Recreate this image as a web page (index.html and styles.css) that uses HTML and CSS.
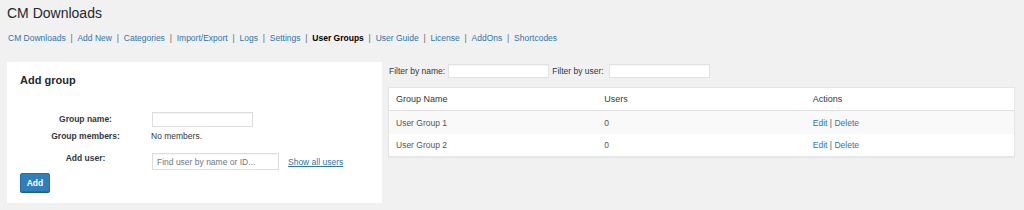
FILE: index.html
```html
<!DOCTYPE html>
<html>
<head>
<meta charset="utf-8">
<link rel="stylesheet" href="styles.css">
</head>
<body>
<div class="wrap">
  <h1 class="title">CM Downloads</h1>
  <nav class="subnav">
    <a class="nav-link" href="#">CM Downloads</a><span class="sep">|</span>
    <a class="nav-link" href="#">Add New</a><span class="sep">|</span>
    <a class="nav-link" href="#">Categories</a><span class="sep">|</span>
    <a class="nav-link" href="#">Import/Export</a><span class="sep">|</span>
    <a class="nav-link" href="#">Logs</a><span class="sep">|</span>
    <a class="nav-link" href="#">Settings</a><span class="sep">|</span>
    <a class="nav-link current" href="#">User Groups</a><span class="sep">|</span>
    <a class="nav-link" href="#">User Guide</a><span class="sep">|</span>
    <a class="nav-link" href="#">License</a><span class="sep">|</span>
    <a class="nav-link" href="#">AddOns</a><span class="sep">|</span>
    <a class="nav-link" href="#">Shortcodes</a>
  </nav>
  <div class="columns">
    <div class="panel">
      <h2 class="panel-title">Add group</h2>
      <div class="frow frow-1">
        <div class="flabel">Group name:</div>
        <div class="fvalue"><input class="text-input name-input" type="text"></div>
      </div>
      <div class="frow frow-2">
        <div class="flabel">Group members:</div>
        <div class="fvalue members">No members.</div>
      </div>
      <div class="frow frow-3">
        <div class="flabel">Add user:</div>
        <div class="fvalue user-line">
          <input class="text-input user-input" type="text" placeholder="Find user by name or ID...">
          <a class="show-all" href="#">Show all users</a>
        </div>
      </div>
      <button class="btn-add" type="button">Add</button>
    </div>
    <div class="list">
      <div class="filters">
        <span class="filter-label">Filter by name:</span>
        <input class="text-input filter-input" type="text">
        <span class="filter-label">Filter by user:</span>
        <input class="text-input filter-input" type="text">
      </div>
      <table class="groups">
        <thead>
          <tr><th>Group Name</th><th>Users</th><th>Actions</th></tr>
        </thead>
        <tbody>
          <tr class="alt"><td>User Group 1</td><td>0</td><td><a href="#">Edit</a> <span class="bar">|</span> <a href="#">Delete</a></td></tr>
          <tr><td>User Group 2</td><td>0</td><td><a href="#">Edit</a> <span class="bar">|</span> <a href="#">Delete</a></td></tr>
        </tbody>
      </table>
    </div>
  </div>
</div>
</body>
</html>
```
FILE: styles.css
```css
html, body {
  margin: 0;
  padding: 0;
  background: #f1f1f1;
}
body {
  font-family: "Liberation Sans", Arial, Helvetica, sans-serif;
  color: #23282d;
  font-size: 8.5px;
}
.wrap {
  padding: 5px 9px 0 7px;
}
.title {
  margin: 0;
  font-size: 14px;
  font-weight: 400;
  line-height: 16px;
  color: #23282d;
}
.subnav {
  margin-top: 11px;
  display: flex;
  align-items: center;
  line-height: 12px;
  padding-left: 1px;
  white-space: nowrap;
}
.nav-link {
  color: #2f75a8;
  text-decoration: none;
}
.nav-link.current {
  color: #000;
  font-weight: 700;
}
.sep {
  color: #666;
  margin: 0 4.8px;
}
.columns {
  margin-top: 18px;
  display: flex;
  align-items: flex-start;
  gap: 6px;
}
.panel {
  width: 375px;
  box-sizing: border-box;
  background: #fff;
  padding: 11px 13px 11px 13px;
  height: 141px;
}
.panel-title {
  margin: 0;
  font-size: 11px;
  line-height: 14px;
  font-weight: 700;
  color: #23282d;
}
.frow {
  display: grid;
  grid-template-columns: 131px auto;
  align-items: start;
}
.flabel {
  text-align: center;
  font-weight: 700;
  line-height: 12px;
  color: #32373c;
}
.frow-1 {
  margin-top: 25px;
}
.frow-1 .flabel {
  padding-top: 1px;
}
.frow-2 {
  margin-top: 3px;
}
.frow-2 .fvalue {
  line-height: 12px;
  color: #32373c;
}
.frow-3 {
  margin-top: 11px;
}
.frow-3 .flabel {
  line-height: 10px;
}
.user-line {
  display: flex;
  align-items: center;
  gap: 9px;
}
.text-input {
  box-sizing: border-box;
  margin: 0;
  border: 1px solid #ddd;
  background: #fff;
  font-family: "Liberation Sans", Arial, sans-serif;
  font-size: 8.5px;
  color: #32373c;
  box-shadow: inset 0 1px 1px rgba(0,0,0,0.04);
  outline: none;
}
.name-input {
  margin-left: 1px;
  width: 101px;
  height: 15px;
}
.user-input {
  margin-left: 1px;
  width: 127px;
  height: 17px;
  padding: 0 4px;
}
.user-input::placeholder {
  color: #72777c;
}
.show-all {
  color: #2f75a8;
  text-decoration: underline;
}
.btn-add {
  display: block;
  margin-top: 3px;
  width: 30px;
  height: 19px;
  padding: 0;
  border: 1px solid #266fa3;
  border-radius: 2px;
  background: #2f80ba;
  color: #fff;
  font-family: "Liberation Sans", Arial, sans-serif;
  font-size: 8.5px;
  font-weight: 700;
  box-shadow: 0 1px 0 #1f5f8c;
}
.list {
  flex: 1;
  padding-top: 2px;
}
.filters {
  display: flex;
  align-items: center;
  height: 14px;
  padding-left: 1px;
  color: #32373c;
}
.filter-label {
  margin-right: 3px;
}
.filter-input {
  width: 101px;
  height: 14px;
  margin-right: 3px;
  border-color: #e2e2e2;
}
.filter-input + .filter-label {
  margin-right: 5px;
}
.groups {
  margin-top: 9px;
  width: 100%;
  border-collapse: collapse;
  background: #fff;
  border: 1px solid #e5e5e5;
  box-shadow: 0 1px 1px rgba(0,0,0,0.04);
  table-layout: fixed;
}
.groups th {
  text-align: left;
  font-weight: 400;
  font-size: 9px;
  color: #32373c;
  height: 22px;
  padding: 0 7px;
  border-bottom: 1px solid #e1e1e1;
}
.groups td {
  height: 22px;
  padding: 0 7px;
  color: #555;
}
.groups tr.alt td {
  background: #f9f9f9;
  height: 23px;
}
.groups td a {
  color: #2f75a8;
  text-decoration: none;
}
.groups .bar {
  color: #555;
}
```
